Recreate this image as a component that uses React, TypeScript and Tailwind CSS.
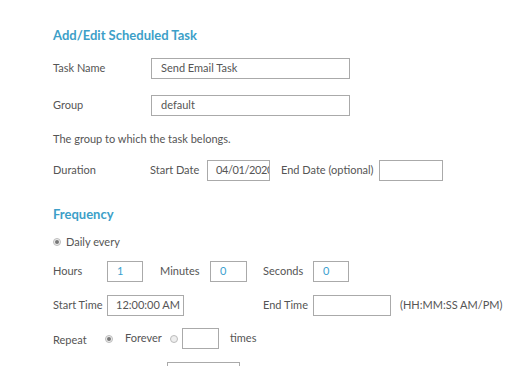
import React from "react";

const label = "text-[11px] text-[#555] whitespace-nowrap";
const box = "h-[21px] border border-[#aaa] bg-white flex items-center text-[11px] whitespace-nowrap overflow-hidden";

const Radio = ({ checked }: { checked?: boolean }) => (
  <span className="w-[8px] h-[8px] shrink-0 rounded-full border border-[#bbb] bg-[#eee] flex items-center justify-center">
    {checked && <span className="w-[4px] h-[4px] rounded-full bg-[#777]" />}
  </span>
);

export default function App() {
  return (
    <div
      className="w-[532px] h-[366px] overflow-hidden bg-white pl-[53px] flex flex-col"
      style={{ fontFamily: 'Lato, "Open Sans", sans-serif' }}
    >
      <h1 className="mt-[26px] h-[18px] leading-[18px] text-[13px] font-bold text-[#3d9fc8]">
        Add/Edit Scheduled Task
      </h1>

      <div className="mt-[14px] flex items-center">
        <span className={`${label} w-[98px]`}>Task Name</span>
        <div className={`${box} w-[199px] px-[9px] text-[#555]`}>Send Email Task</div>
      </div>

      <div className="mt-[16px] flex items-center">
        <span className={`${label} w-[98px]`}>Group</span>
        <div className={`${box} w-[199px] px-[9px] text-[#555]`}>default</div>
      </div>

      <p className={`${label} mt-[14px] h-[17px] leading-[17px]`}>The group to which the task belongs.</p>

      <div className="mt-[13px] flex items-center">
        <span className={`${label} w-[97px]`}>Duration</span>
        <span className={`${label} w-[57px]`}>Start Date</span>
        <div className={`${box} w-[63px] pl-[8px] text-[#555] tracking-[-0.4px]`}>04/01/2020</div>
        <span className={`${label} ml-[11px] w-[98px]`}>End Date (optional)</span>
        <div className={`${box} w-[64px]`} />
      </div>

      <div className="mt-[11px] h-px bg-[#e8e8e8]" />

      <h2 className="mt-[12px] h-[20px] leading-[20px] text-[13px] font-bold text-[#3d9fc8]">Frequency</h2>

      <div className="mt-[10px] h-[16px] flex items-center gap-[5px]">
        <Radio checked />
        <span className={label}>Daily every</span>
      </div>

      <div className="mt-[11px] flex items-center">
        <span className={`${label} w-[54px]`}>Hours</span>
        <div className={`${box} w-[36px] px-[9px] text-[#3a9fcf]`}>1</div>
        <span className={`${label} ml-[17px] w-[50px]`}>Minutes</span>
        <div className={`${box} w-[37px] px-[9px] text-[#3a9fcf]`}>0</div>
        <span className={`${label} ml-[16px] w-[50px]`}>Seconds</span>
        <div className={`${box} w-[36px] px-[9px] text-[#3a9fcf]`}>0</div>
      </div>

      <div className="mt-[13px] flex items-center">
        <span className={`${label} w-[54px]`}>Start Time</span>
        <div className={`${box} w-[77px] px-[8px] text-[#555]`}>12:00:00 AM</div>
        <span className={`${label} ml-[79px] w-[50px]`}>End Time</span>
        <div className={`${box} w-[78px]`} />
        <span className={`${label} ml-[9px]`}>(HH:MM:SS AM/PM)</span>
      </div>

      <div className="mt-[12px] flex items-center">
        <span className={`${label} w-[52px] pt-[3px]`}>Repeat</span>
        <Radio checked />
        <span className={`${label} ml-[12px] w-[45px]`}>Forever</span>
        <Radio />
        <div className={`${box} ml-[4px] w-[37px]`} />
        <span className={`${label} ml-[11px]`}>times</span>
      </div>

      <div className="mt-[13px] ml-[114px] w-[73px] h-[21px] shrink-0 border border-[#aaa]" />
    </div>
  );
}
